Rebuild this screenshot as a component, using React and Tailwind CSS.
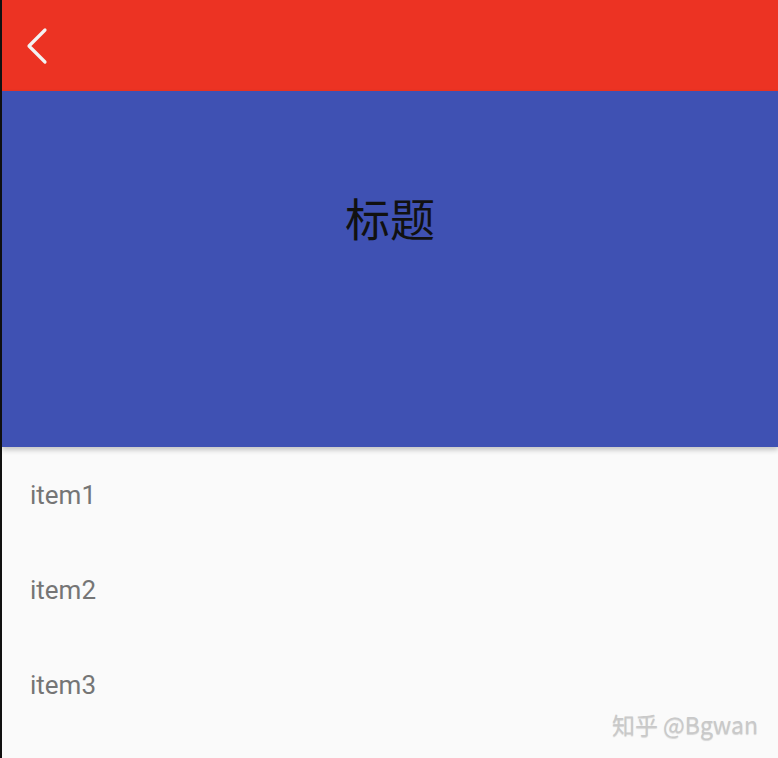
import React from 'react';

const items = ['item1', 'item2', 'item3'];

export default function App() {
  return (
    <div className="relative flex h-[758px] w-[778px] overflow-hidden bg-[#111]" style={{ fontFamily: 'Roboto, "Noto Sans CJK SC", sans-serif' }}>
      <div className="ml-[2px] flex flex-1 flex-col bg-[#fafafa]">
        {/* toolbar */}
        <div className="flex h-[91px] items-center bg-[#ec3323] pl-[24px]">
          <svg width="24" height="40" viewBox="0 0 24 40" fill="none">
            <path d="M19 4 L3 20 L19 36" stroke="#f3f3f3" strokeWidth="3.2" strokeLinecap="round" strokeLinejoin="round" />
          </svg>
        </div>
        {/* header */}
        <div className="relative z-10 h-[356px] bg-[#3f51b3] pt-[100px] text-center shadow-[0_3px_5px_rgba(0,0,0,0.22)]">
          <span className="text-[45px] leading-[62px] text-[#111]">标题</span>
        </div>
        {/* list */}
        <div className="flex flex-col pt-[26px]">
          {items.map((it) => (
            <div key={it} className="flex h-[95px] items-start pl-[28px] pt-[6px] text-[26px] leading-[32px] text-[#757575]">
              {it}
            </div>
          ))}
        </div>
      </div>
      <div className="absolute right-[20px] top-[708px] text-[23px] font-normal leading-[32px] text-[#c9c9c9] [text-shadow:0_1px_1px_rgba(0,0,0,0.15)]" style={{ fontFamily: '"Noto Sans CJK SC", sans-serif' }}>
        知乎 @Bgwan
      </div>
    </div>
  );
}
